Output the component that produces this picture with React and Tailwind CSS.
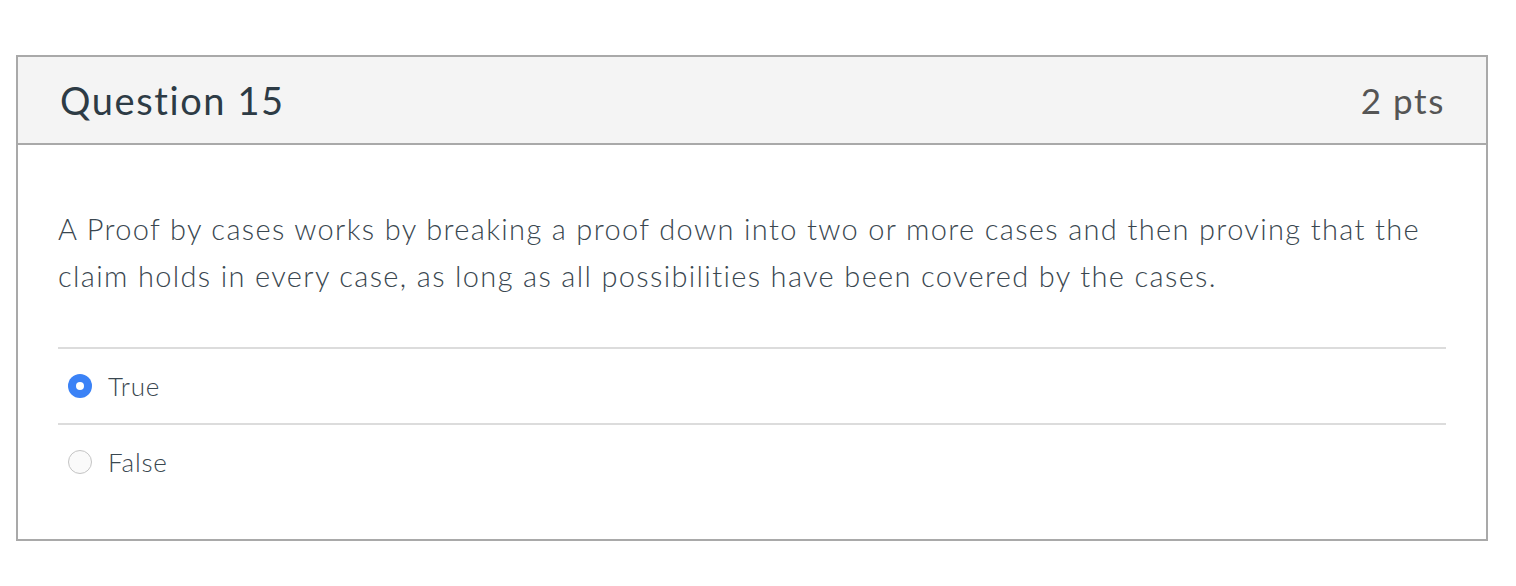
const ANSWERS = [
  { label: "True", checked: true },
  { label: "False", checked: false },
];

function Radio({ checked }) {
  if (checked) {
    return (
      <span className="flex h-[24px] w-[24px] items-center justify-center rounded-full bg-[#3b82f6]">
        <span className="h-[8px] w-[8px] rounded-full bg-white" />
      </span>
    );
  }
  return <span className="h-[24px] w-[24px] rounded-full border border-[#c4c4c4] bg-[#fafafa]" />;
}

export default function App() {
  return (
    <div className="bg-white pt-[55px] pl-[16px] pb-[44px] font-['Lato','Open_Sans',sans-serif] text-[#2d3b45]">
      <div className="w-[1472px] border-2 border-[#a9a9a9]">
        <div className="flex h-[88px] items-center justify-between border-b-2 border-[#a9a9a9] bg-[#f4f4f4] pl-[42px] pr-[41px]">
          <h2 className="text-[38px] font-normal leading-none tracking-[1.6px]">Question 15</h2>
          <span className="text-[35px] font-normal leading-none tracking-[1.6px] text-[#555]">2 pts</span>
        </div>
        <div className="px-[40px] pt-[60px] pb-[40px]">
          <p className="text-[29px] font-light leading-[47px] tracking-[1.35px] text-[#3a4750]">
            A Proof by cases works by breaking a proof down into two or more cases and then proving that the claim holds in every case, as long as all possibilities have been covered by the cases.
          </p>
          <div className="mt-[48px]">
            {ANSWERS.map((a) => (
              <div key={a.label} className="flex h-[76px] items-center gap-[16px] border-t-2 border-[#dcdcdc] pl-[10px]">
                <Radio checked={a.checked} />
                <span className="text-[26px] font-light tracking-[0.8px] text-[#3a4750]">{a.label}</span>
              </div>
            ))}
          </div>
        </div>
      </div>
    </div>
  );
}
